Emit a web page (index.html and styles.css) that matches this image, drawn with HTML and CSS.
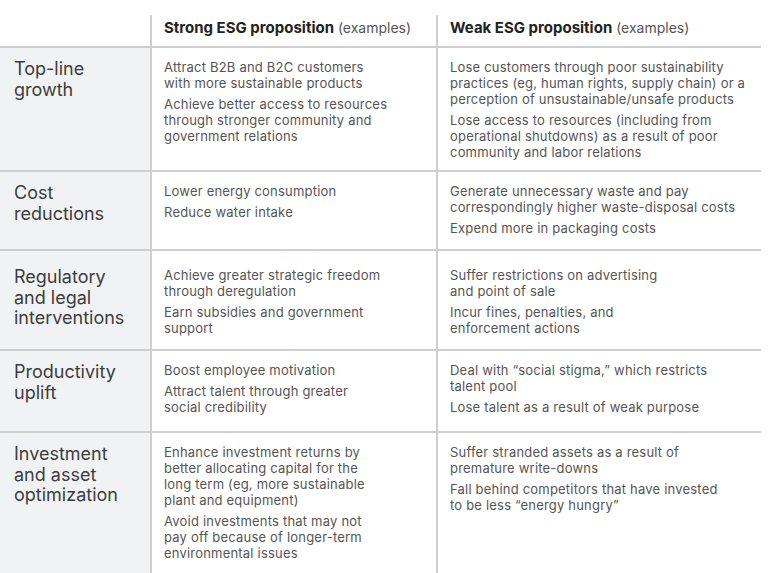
FILE: index.html
```html
<!DOCTYPE html>
<html>
<head>
<meta charset="utf-8">
<link rel="stylesheet" href="styles.css">
</head>
<body>
<div class="table">
  <div class="head blank"></div>
  <div class="head col"><b>Strong ESG proposition</b> (examples)</div>
  <div class="head col"><b>Weak ESG proposition</b> (examples)</div>

  <div class="label">Top-line<br>growth</div>
  <div class="col body">
    <p>Attract B2B and B2C customers<br>with more sustainable products</p>
    <p>Achieve better access to resources<br>through stronger community and<br>government relations</p>
  </div>
  <div class="col body">
    <p>Lose customers through poor sustainability<br>practices (eg, human rights, supply chain) or a<br>perception of unsustainable/unsafe products</p>
    <p>Lose access to resources (including from<br>operational shutdowns) as a result of poor<br>community and labor relations</p>
  </div>

  <div class="label">Cost<br>reductions</div>
  <div class="col body">
    <p>Lower energy consumption</p>
    <p>Reduce water intake</p>
  </div>
  <div class="col body">
    <p>Generate unnecessary waste and pay<br>correspondingly higher waste-disposal costs</p>
    <p>Expend more in packaging costs</p>
  </div>

  <div class="label low">Regulatory<br>and legal<br>interventions</div>
  <div class="col body low">
    <p>Achieve greater strategic freedom<br>through deregulation</p>
    <p>Earn subsidies and government<br>support</p>
  </div>
  <div class="col body low">
    <p>Suffer restrictions on advertising<br>and point of sale</p>
    <p>Incur fines, penalties, and<br>enforcement actions</p>
  </div>

  <div class="label">Productivity<br>uplift</div>
  <div class="col body">
    <p>Boost employee motivation</p>
    <p>Attract talent through greater<br>social credibility</p>
  </div>
  <div class="col body">
    <p>Deal with “social stigma,” which restricts<br>talent pool</p>
    <p>Lose talent as a result of weak purpose</p>
  </div>

  <div class="label">Investment<br>and asset<br>optimization</div>
  <div class="col body">
    <p>Enhance investment returns by<br>better allocating capital for the<br>long term (eg, more sustainable<br>plant and equipment)</p>
    <p>Avoid investments that may not<br>pay off because of longer-term<br>environmental issues</p>
  </div>
  <div class="col body">
    <p>Suffer stranded assets as a result of<br>premature write-downs</p>
    <p>Fall behind competitors that have invested<br>to be less “energy hungry”</p>
  </div>
</div>
</body>
</html>
```
FILE: styles.css
```css
html, body {
  margin: 0;
  padding: 0;
  background: #ffffff;
}
body {
  font-family: "Inter", "Liberation Sans", sans-serif;
  color: #555555;
  height: 573px;
  overflow: hidden;
}
.table {
  margin-top: 15px;
  width: 761px;
  display: grid;
  grid-template-columns: 150px 286px 325px;
  grid-template-rows: 31px 124px 79px 100px 82px 142px;
}
.head {
  font-size: 14px;
  line-height: 17px;
  padding: 4px 0 0 14px;
  color: #555;
  white-space: nowrap;
}
.head b {
  color: #222;
  font-weight: 700;
  font-size: 15px;
}
.col {
  border-left: 2px solid #cfcfcf;
}
.head.col {
  padding-left: 12px;
}
.label {
  background: #f1f2f4;
  border-top: 2px solid #cfcfcf;
  font-size: 18px;
  line-height: 20.5px;
  color: #3d3d3d;
  padding: 11px 0 0 14px;
}
.body {
  border-top: 2px solid #cfcfcf;
  padding: 11px 0 0 12px;
  font-size: 13px;
  line-height: 16px;
  letter-spacing: 0.2px;
  white-space: nowrap;
}
.body p {
  margin: 0 0 5px 0;
}
.label.low,
.body.low {
  padding-top: 16px;
}
```
